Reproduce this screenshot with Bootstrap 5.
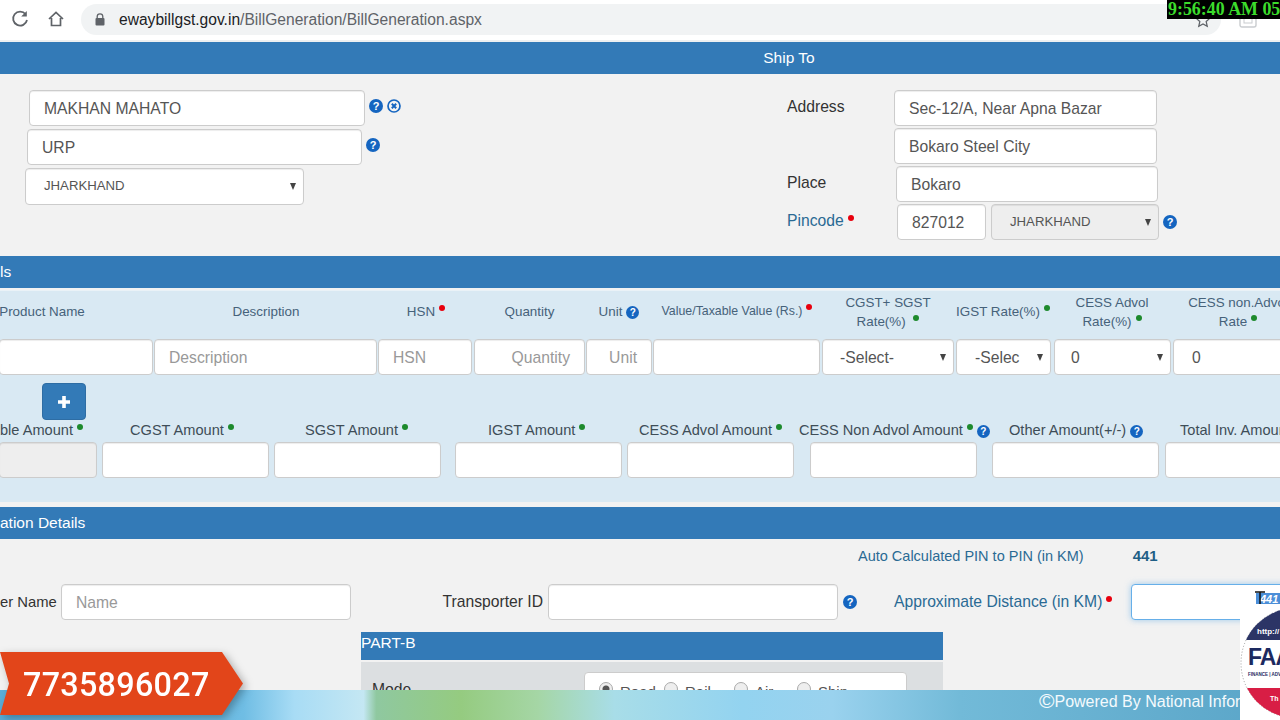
<!DOCTYPE html>
<html>
<head>
    <meta charset="UTF-8">
    <title>E-Way Bill</title>
    <link href="https://cdn.jsdelivr.net/npm/bootstrap@5.3.3/dist/css/bootstrap.min.css" rel="stylesheet">
    <style>
        html, body { margin: 0; height: 720px; overflow: hidden; }
        body { font-family: "Liberation Sans", Arial, sans-serif; background: #f2f2f2; color: #333; }
        .screen { position: relative; width: 1280px; height: 720px; overflow: hidden; }

        .chrome-bar { height: 42px; background: #fff; padding-left: 10px; border-bottom: 2px solid #eef0f1; }
        .url-pill { width: 1140px; height: 31px; margin-left: 15px; margin-top: 4px; background: #f1f3f4; border-radius: 16px; padding-left: 14px; padding-right: 10px; font-size: 15.6px; color: #5f6368; }
        .url-pill b { font-weight: 400; color: #202124; }
        .url-text { margin-left: 14px; }
        .nav-ico { width: 20px; height: 20px; margin-top: 9px; flex: none; }
        .home-ico { margin-left: 16px; }
        .ext-ico { width: 18px; height: 18px; margin: 10px 0 0 18px; flex: none; }

        .sec-head { height: 32px; background: #337ab7; color: #fff; font-size: 15.5px; line-height: 32px; white-space: nowrap; }
        .ship-title { padding-left: 298px; }

        .field { height: 36px; background: #fff; border: 1px solid #ccc; border-radius: 4px; box-shadow: inset 0 1px 1px rgba(0,0,0,.075); font-size: 15.7px; color: #555; line-height: 35px; padding: 0 14px; white-space: nowrap; overflow: hidden; position: relative; flex: none; }
        .field.ghost { color: #999; }
        .field.off { background: #eee; }
        .field.pick::after { content: ""; position: absolute; right: 7px; top: 14px; border-left: 3.5px solid transparent; border-right: 3.5px solid transparent; border-top: 7px solid #444; }
        .field.tiny { font-size: 13.2px; padding-left: 18px; line-height: 34px; }
        .help { display: inline-block; width: 14px; height: 14px; flex: none; border-radius: 50%; background: #1565c0; color: #fff; font-size: 11px; font-weight: 700; font-style: normal; line-height: 14px; text-align: center; }
        .help-sm { width: 13px; height: 13px; line-height: 13px; font-size: 10px; margin-left: 4px; }
        .close-ico { width: 14px; height: 14px; flex: none; }
        .lift { margin-bottom: 4px; }
        .lbl { font-size: 15.7px; color: #333; white-space: nowrap; }
        .lbl-blue { color: #2a6a94; }
        .dot { display: inline-block; width: 6px; height: 6px; border-radius: 50%; margin-left: 4px; vertical-align: 5px; }
        .dot-red { background: #e8000d; }
        .dot-green { background: #1d8a2c; }

        .ship-panel { height: 182px; }
        .ship-left { width: 420px; padding-top: 15px; }
        .ship-right { margin-left: 367px; padding-top: 15px; }
        .ship-row { height: 38px; }
        .ship-lbl { width: 107px; flex: none; }
        .ship-lbl span { position: relative; top: -1px; }

        .items-panel { margin-top: 2px; height: 212px; background: #d9e9f3; border-top: 1px solid #eaf2f7; margin-bottom: 5px; }
        .cell-row { display: flex; white-space: nowrap; }
        .hdr-row { height: 48px; padding-bottom: 7px; font-size: 13.4px; text-align: center; line-height: 19px; color: #46627a; }
        .hdr-row > div { flex: none; display: flex; align-items: center; justify-content: center; }
        .item-row { gap: 1px; }
        .add-btn { width: 44px; height: 37px; margin: 8px 0 0 42px; background: #337ab7; border: 1px solid #2e6da4; border-radius: 4px; display: flex; align-items: center; justify-content: center; padding: 0; }
        .amt-labels { height: 22px; font-size: 14.6px; line-height: 20px; color: #3e4d57; }
        .amt-labels > div { flex: none; }

        .pin-row { height: 32px; font-size: 14.5px; color: #2a6a94; padding-left: 858px; line-height: 33px; }
        .pin-row b { color: #1f5f86; margin-left: 49px; font-size: 15px; }
        .trans-row { margin-top: 12px; height: 38px; }
        .name-lbl { width: 61px; padding-right: 5px; flex: none; font-size: 14.8px; }
        .focus-field { border-color: #66afe9; box-shadow: 0 0 6px rgba(102,175,233,.6); }
        .part-b { width: 582px; margin-left: 361px; margin-top: 11px; }
        .part-b .sec-head { height: 28px; line-height: 22px; }
        .mode-box { height: 60px; margin-top: 2px; background: #dcdfe1; padding: 10px 0 0 11px; font-size: 15.7px; }
        .mode-lbl { width: 0; white-space: nowrap; padding-top: 6px; }
        .mode-opts { width: 323px; height: 40px; margin-left: 212px; background: #fff; border: 1px solid #ccc; border-radius: 4px; padding: 6px 0 0 14px; color: #555; font-size: 15px; white-space: nowrap; }
        .mode-opts span { padding-top: 2px; }
        .radio-dot { width: 14px; height: 14px; margin-right: 7px; margin-top: 3px; border: 1px solid #aaa; border-radius: 50%; background: #eee; flex: none; }
        .radio-dot.on { background: radial-gradient(circle, #555 0 3px, #eee 4px); }

        /* things from the video recording, sitting over the page */
        .clock { position: absolute; top: 0; right: 0; width: 113px; height: 19px; background: #000; color: #3cdc2c; font-family: "Liberation Serif", serif; font-weight: 700; font-size: 17.9px; line-height: 19px; padding-left: 1px; white-space: nowrap; overflow: hidden; }
        .foot-strip { position: absolute; left: 0; right: 0; bottom: 0; height: 30px; background: linear-gradient(90deg, #5aaed8 0%, #6fbde4 19%, #a8dcf5 23%, #c4e7f3 28.4%, #8fc8a0 29.4%, #95cb80 36%, #a5d6a5 42%, #a8dde8 48%, #93d3f0 58%, #9ad2ee 65%, #72bad8 75%, #5aa5c8 100%); color: #f4fafd; font-size: 16px; line-height: 23px; padding-left: 1039px; white-space: nowrap; }
        .copy-mark { font-size: 21px; line-height: 20px; vertical-align: -1px; }
        .phone-wrap { position: absolute; left: 0; top: 652px; filter: drop-shadow(3px 3px 4px rgba(0,0,0,.3)); }
        .phone-tag { width: 243px; height: 63px; background: #e2451a; clip-path: polygon(0 0, 222px 0, 243px 50%, 222px 100%, 0 100%, 9px 50%); color: #fff; font-family: Roboto, "Liberation Sans", sans-serif; font-weight: 500; font-size: 32.3px; line-height: 66px; padding-left: 23px; letter-spacing: .3px; }
        .logo-badge { position: absolute; left: 1240px; top: 604px; width: 40px; height: 116px; background: #fff; overflow: hidden; }
        .picked-text { position: absolute; left: 1256px; top: 593px; width: 24px; height: 13px; background: #4a8ed8; color: #fff; font-size: 11px; line-height: 13px; padding-left: 4px; font-weight: 700; font-style: italic; }
        .ibeam { position: absolute; left: 1254px; top: 591px; width: 12px; height: 15px; }
    </style>
</head>
<body>
<div class="screen">
    <div class="chrome-bar d-flex">
        <svg class="nav-ico" viewBox="0 0 20 20"><path d="M15.6 5.2A7 7 0 1 0 17 11" fill="none" stroke="#5f6368" stroke-width="1.8"/><path d="M16.8 2v5.6h-5.6z" fill="#5f6368"/></svg>
        <svg class="nav-ico home-ico" viewBox="0 0 20 20"><path d="M3 10l7-6.5 7 6.5M5.5 9v7.5h9V9" fill="none" stroke="#5f6368" stroke-width="1.7"/></svg>
        <div class="url-pill d-flex align-items-center">
            <svg width="10" height="13" viewBox="0 0 10 13"><path d="M2.2 5V3.6a2.8 2.8 0 0 1 5.6 0V5" fill="none" stroke="#5f6368" stroke-width="1.3"/><rect x="0.5" y="5" width="9" height="7.5" rx="1" fill="#5f6368"/></svg>
            <span class="url-text"><b>ewaybillgst.gov.in</b>/BillGeneration/BillGeneration.aspx</span>
            <svg class="ms-auto" width="16" height="16" viewBox="0 0 16 16"><path d="M8 1.5l2 4.4 4.7.5-3.5 3.2 1 4.7L8 11.9l-4.2 2.4 1-4.7L1.3 6.4l4.700-.5z" fill="none" stroke="#5f6368" stroke-width="1.3"/></svg>
        </div>
        <svg class="ext-ico" viewBox="0 0 18 18"><rect x="1" y="1" width="16" height="16" rx="2" fill="none" stroke="#c9cccf" stroke-width="1.4"/><rect x="5" y="7" width="8" height="6" fill="none" stroke="#c9cccf"/></svg>
    </div>

    <div class="sec-head text-center ship-title">Ship To</div>
    <div class="ship-panel d-flex">
        <div class="ship-left">
            <div class="d-flex align-items-center gap-1" style="margin-left:29px;height:38px">
                <div class="field" style="width:336px">MAKHAN MAHATO</div>
                <i class="help lift">?</i>
                <svg class="close-ico lift" viewBox="0 0 14 14"><circle cx="7" cy="7" r="6" fill="none" stroke="#1565c0" stroke-width="1.7"/><path d="M4.8 4.8l4.4 4.4M9.2 4.8l-4.400 4.400" stroke="#1565c0" stroke-width="2"/></svg>
            </div>
            <div class="d-flex align-items-center gap-1" style="margin-left:27px;height:40px">
                <div class="field" style="width:335px">URP</div>
                <i class="help lift">?</i>
            </div>
            <div class="field pick tiny" style="width:279px;margin-left:25px;height:37px;top:1px">JHARKHAND</div>
        </div>
        <div class="ship-right">
            <div class="d-flex align-items-center ship-row"><div class="lbl ship-lbl"><span>Address</span></div><div class="field" style="width:263px">Sec-12/A, Near Apna Bazar</div></div>
            <div class="d-flex align-items-center ship-row"><div class="ship-lbl"></div><div class="field" style="width:263px">Bokaro Steel City</div></div>
            <div class="d-flex align-items-center ship-row"><div class="lbl ship-lbl" style="width:109px"><span>Place</span></div><div class="field" style="width:262px">Bokaro</div></div>
            <div class="d-flex align-items-center ship-row"><div class="lbl lbl-blue ship-lbl" style="width:110px"><span>Pincode<i class="dot dot-red"></i></span></div><div class="field" style="width:89px">827012</div><div class="field pick tiny off" style="width:168px;margin-left:5px">JHARKHAND</div><i class="help" style="margin-left:4px">?</i></div>
        </div>
    </div>

    <div class="sec-head">ls</div>
    <div class="items-panel">
        <div class="cell-row hdr-row">
            <div style="width:84px"><span>Product Name</span></div>
            <div style="width:70px"></div>
            <div style="width:224px"><span>Description</span></div>
            <div style="width:96px"><span>HSN<i class="dot dot-red"></i></span></div>
            <div style="width:111px"><span>Quantity</span></div>
            <div style="width:68px"><span>Unit<i class="help help-sm">?</i></span></div>
            <div style="width:168px;font-size:12.35px"><span>Value/Taxable Value (Rs.)<i class="dot dot-red"></i></span></div>
            <div style="width:134px"><span>CGST+ SGST<br>Rate(%) <i class="dot dot-green"></i></span></div>
            <div style="width:96px"><span>IGST Rate(%)<i class="dot dot-green"></i></span></div>
            <div style="width:122px"><span>CESS Advol<br>Rate(%)<i class="dot dot-green"></i></span></div>
            <div style="width:130px"><span>CESS non.Advol<br>Rate<i class="dot dot-green"></i></span></div>
        </div>
        <div class="cell-row item-row">
            <div class="field" style="width:154px;margin-left:-1px"></div>
            <div class="field ghost" style="width:223px">Description</div>
            <div class="field ghost" style="width:94px">HSN</div>
            <div class="field ghost text-end" style="width:111px;margin-left:1px">Quantity</div>
            <div class="field ghost text-end" style="width:66px">Unit</div>
            <div class="field" style="width:167px"></div>
            <div class="field pick" style="width:132px;margin-left:1px;padding-left:17px">-Select-</div>
            <div class="field pick" style="width:95px;margin-left:1px;padding-left:18px">-Selec</div>
            <div class="field pick" style="width:117px;margin-left:2px;padding-left:16px">0</div>
            <div class="field" style="width:130px;margin-left:1px;padding-left:18px">0</div>
        </div>
        <button class="add-btn" type="button"><svg width="16" height="16" viewBox="0 0 16 16"><path d="M8 2v12M2 8h12" stroke="#fff" stroke-width="3.6"/></svg></button>
        <div class="cell-row amt-labels">
            <div style="width:130px">ble Amount<i class="dot dot-green"></i></div>
            <div style="width:175px">CGST Amount<i class="dot dot-green"></i></div>
            <div style="width:183px">SGST Amount<i class="dot dot-green"></i></div>
            <div style="width:151px">IGST Amount<i class="dot dot-green"></i></div>
            <div style="width:160px">CESS Advol Amount<i class="dot dot-green"></i></div>
            <div style="width:210px">CESS Non Advol Amount<i class="dot dot-green"></i><i class="help help-sm">?</i></div>
            <div style="width:171px">Other Amount(+/-)<i class="help help-sm">?</i></div>
            <div style="width:200px">Total Inv. Amount</div>
        </div>
        <div class="cell-row">
            <div class="field off" style="width:98px;margin-left:-1px"></div>
            <div class="field" style="width:167px;margin-left:5px"></div>
            <div class="field" style="width:167px;margin-left:5px"></div>
            <div class="field" style="width:167px;margin-left:14px"></div>
            <div class="field" style="width:167px;margin-left:5px"></div>
            <div class="field" style="width:167px;margin-left:16px"></div>
            <div class="field" style="width:167px;margin-left:15px"></div>
            <div class="field" style="width:167px;margin-left:6px"></div>
        </div>
    </div>

    <div class="sec-head">ation Details</div>
    <div>
        <div class="pin-row">Auto Calculated PIN to PIN (in KM)<b>441</b></div>
        <div class="d-flex align-items-center trans-row">
            <div class="lbl text-end name-lbl">er Name</div>
            <div class="field ghost" style="width:290px">Name</div>
            <div class="lbl text-end" style="width:197px;padding-right:5px;flex:none">Transporter ID</div>
            <div class="field" style="width:290px"></div>
            <i class="help" style="margin-left:5px">?</i>
            <div class="lbl lbl-blue" style="margin-left:37px;width:237px;flex:none">Approximate Distance (in KM)<i class="dot dot-red"></i></div>
            <div class="field focus-field" style="width:170px"></div>
        </div>
        <div class="part-b">
            <div class="sec-head">PART-B</div>
            <div class="mode-box d-flex">
                <div class="mode-lbl">Mode</div>
                <div class="mode-opts d-flex">
                    <i class="radio-dot on"></i><span style="width:44px">Road</span>
                    <i class="radio-dot"></i><span style="width:49px">Rail</span>
                    <i class="radio-dot"></i><span style="width:42px">Air</span>
                    <i class="radio-dot"></i><span>Ship</span>
                </div>
            </div>
        </div>
    </div>

    <div class="foot-strip"><span class="copy-mark">&#169;</span>Powered By National Infor</div>
    <div class="phone-wrap"><div class="phone-tag">7735896027</div></div>
    <div class="picked-text">441</div>
    <svg class="ibeam" viewBox="0 0 12 15"><path d="M1 1h10M1 14h10M6 1v13" stroke="#111" stroke-width="1.5" fill="none"/></svg>
    <div class="logo-badge">
        <svg width="40" height="116" viewBox="0 0 40 116">
            <defs><clipPath id="disc"><circle cx="56" cy="59" r="55"/></clipPath></defs>
            <circle cx="56" cy="59" r="55" fill="#fff" stroke="#999" stroke-dasharray="1 2"/>
            <g clip-path="url(#disc)">
                <rect width="40" height="36" fill="#2c3566"/>
                <rect y="84" width="40" height="32" fill="#d81e45"/>
            </g>
            <text x="17" y="30" font-size="8" font-weight="700" fill="#fff" font-family="Liberation Sans">http://</text>
            <text x="8" y="61" font-size="23" font-weight="700" letter-spacing="-1" fill="#1d2a60" font-family="Liberation Sans">FAA</text>
            <text x="8" y="72" font-size="4.5" font-weight="700" fill="#1d2a60" font-family="Liberation Sans">FINANCE | ADV</text>
            <text x="30" y="97" font-size="7" font-weight="700" fill="#fff" font-family="Liberation Sans">Th</text>
        </svg>
    </div>
    <div class="clock">9:56:40 AM 05</div>
</div>
<script src="https://cdn.jsdelivr.net/npm/bootstrap@5.3.3/dist/js/bootstrap.bundle.min.js"></script>
</body>
</html>
